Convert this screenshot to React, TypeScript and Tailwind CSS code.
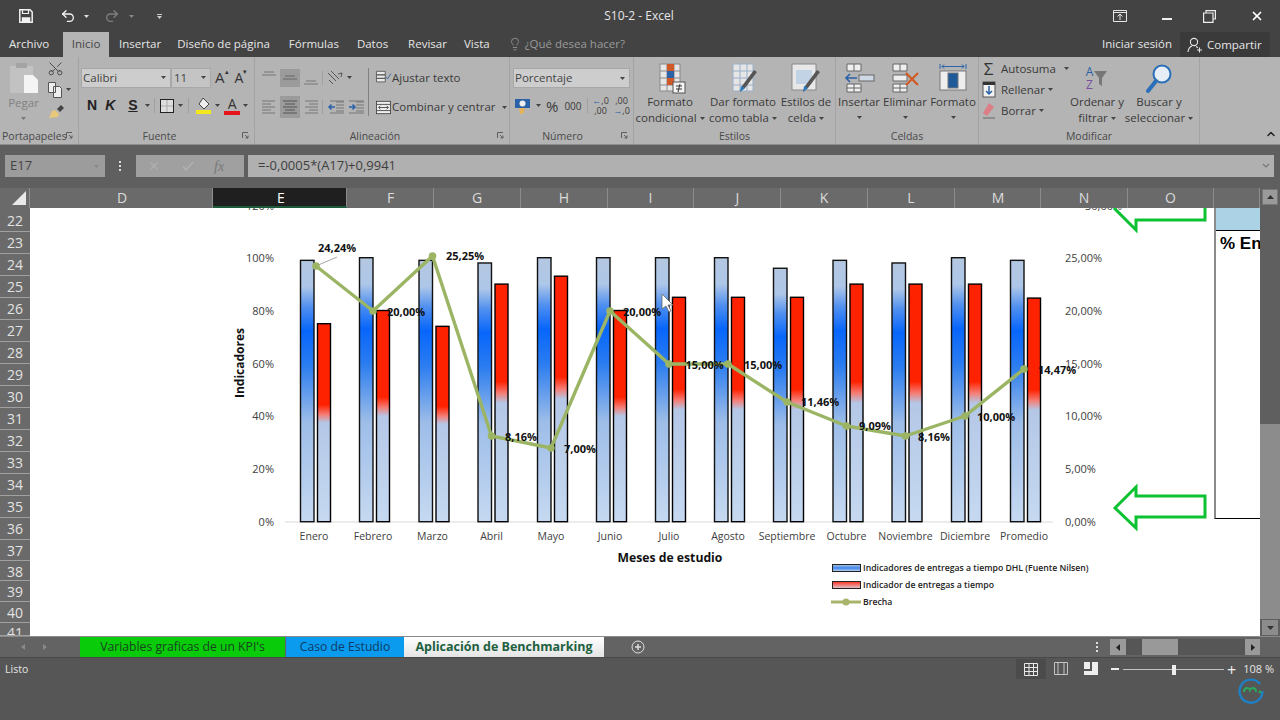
import { ReactNode } from "react"
import { ChevronUp, Lightbulb, Redo2, Scissors, Undo2, X } from "lucide-react"

const months = ["Enero", "Febrero", "Marzo", "Abril", "Mayo", "Junio", "Julio", "Agosto", "Septiembre", "Octubre", "Noviembre", "Diciembre", "Promedio"]
const centers = [314, 373, 432.5, 491.5, 551, 610, 669, 728, 787, 846.5, 905.5, 965, 1024]
const blue = [99, 100, 99, 98, 100, 100, 100, 100, 96, 99, 98, 100, 99]
const red = [75, 80, 74, 90, 93, 80, 85, 85, 85, 90, 90, 90, 84.7]
const linePts = [266, 311, 256, 436, 448, 311, 364, 364, 402, 426, 436, 416, 369]
const labels: [string, number, number][] = [
  ["24,24%", 318, 248], ["20,00%", 387, 312], ["25,25%", 446, 256], ["8,16%", 505, 437], ["7,00%", 564, 449],
  ["20,00%", 623, 312], ["15,00%", 685.5, 365], ["15,00%", 744, 365], ["11,46%", 801, 402], ["9,09%", 859, 426],
  ["8,16%", 918, 437], ["10,00%", 977, 417], ["14,47%", 1038, 370],
]
const rows = [
  { n: 22, c: "h-[24px] leading-[26px]" }, { n: 23, c: "h-[22px] leading-[22px]" }, { n: 24, c: "h-[22px] leading-[22px]" }, { n: 25, c: "h-[22px] leading-[22px]" }, { n: 26, c: "h-[22px] leading-[22px]" },
  { n: 27, c: "h-[22px] leading-[22px]" }, { n: 28, c: "h-[22px] leading-[22px]" }, { n: 29, c: "h-[22px] leading-[22px]" }, { n: 30, c: "h-[22px] leading-[22px]" }, { n: 31, c: "h-[22px] leading-[22px]" },
  { n: 32, c: "h-[22px] leading-[22px]" }, { n: 33, c: "h-[22px] leading-[22px]" }, { n: 34, c: "h-[22px] leading-[22px]" }, { n: 35, c: "h-[22px] leading-[22px]" }, { n: 36, c: "h-[22px] leading-[22px]" },
  { n: 37, c: "h-[21px] leading-[21px]" }, { n: 38, c: "h-[20px] leading-[21px]" }, { n: 39, c: "h-[21px] leading-[21px]" }, { n: 40, c: "h-[21px] leading-[21px]" }, { n: 41, c: "h-[13px] leading-[20px]" },
]
const cols = [
  { l: "D", c: "w-[183px] pl-[2px]" }, { l: "E", c: "w-[134px] pl-[3px] bg-[#1f1f1f] text-white border-b-2 border-b-[#1c5a3c]" }, { l: "F", c: "w-[87px] pl-[1px]" }, { l: "G", c: "w-[87px]" },
  { l: "H", c: "w-[87px]" }, { l: "I", c: "w-[86px]" }, { l: "J", c: "w-[87px] pl-[1px]" }, { l: "K", c: "w-[87px]" }, { l: "L", c: "w-[87px]" },
  { l: "M", c: "w-[86px] pl-[1px]" }, { l: "N", c: "w-[87px]" }, { l: "O", c: "w-[86px]" }, { l: "", c: "w-[46px]" },
]

function Caret({ className = "text-[#444]" }: { className?: string }) {
  return (
    <svg width="5" height="3" viewBox="0 0 5 3" className={className}>
      <path d="M0 0h5L2.5 3z" fill="currentColor" />
    </svg>
  )
}

function Launcher() {
  return (
    <svg width="7" height="7" viewBox="0 0 7 7" className="absolute right-[5px] top-[5px] text-[#555]" fill="none" stroke="currentColor">
      <path d="M.5 6V.5H6M3 3l3 3M6 3.5V6H3.5" strokeWidth="0.9" />
    </svg>
  )
}

function Group({ className, label, labelClass = "text-center", launcher, children }: { className: string; label: string; labelClass?: string; launcher?: boolean; children: ReactNode }) {
  return (
    <div className={`flex flex-col shrink-0 border-r border-r-[#a3a3a3] ${className}`}>
      <div className="h-[71px] flex">{children}</div>
      <div className={`relative h-[17px] text-[10.5px] leading-[19px] text-[#4a4a4a] ${labelClass}`}>
        {label}
        {launcher && <Launcher />}
      </div>
    </div>
  )
}

function Lines({ kind, tone = "#777" }: { kind: "l" | "c" | "r" | "t" | "m" | "b"; tone?: string }) {
  const paths = {
    l: "M1 3h13M1 6h9M1 9h13M1 12h9M1 15h13",
    c: "M1 3h14M3 6h10M1 9h14M3 12h10M1 15h14",
    r: "M2 3h13M6 6h9M2 9h13M6 12h9M2 15h13",
    t: "M3 3h10M1 6h14",
    m: "M3 7h10M1 10h14",
    b: "M3 12h10M1 15h14",
  }
  return (
    <svg width="16" height="18" viewBox="0 0 16 18" fill="none" stroke={tone} strokeWidth="1">
      <path d={paths[kind]} />
    </svg>
  )
}

function Big({ className, top, bottom, icon, caretBelow }: { className: string; top: string; bottom?: string; icon: ReactNode; caretBelow?: boolean }) {
  return (
    <div className={`flex flex-col items-center pt-[5px] text-[11.5px] leading-[16px] text-[#3a3a3a] whitespace-nowrap ${className}`}>
      <div className="h-[32px] flex items-center justify-center">{icon}</div>
      <div>{top}</div>
      {bottom && (
        <div className="flex items-center gap-[3px]">
          {bottom}
          <Caret />
        </div>
      )}
      {caretBelow && <div className="mt-[6px]"><Caret /></div>}
    </div>
  )
}

function GridIcon({ children, color = "#8a8a8a" }: { children?: ReactNode; color?: string }) {
  return (
    <svg width="32" height="32" viewBox="0 0 32 32" fill="none">
      <rect x="6" y="2" width="20" height="27" fill="#e6e6e6" stroke={color} />
      <path d="M6 9h20M6 16h20M6 23h20M13 2v27M20 2v27" stroke={color} />
      {children}
    </svg>
  )
}

function SmallRow({ icon, text, caretGap }: { icon: ReactNode; text: string; caretGap: string }) {
  return (
    <div className="h-[21px] flex items-center text-[11.5px] text-[#3a3a3a] whitespace-nowrap">
      <div className="w-[19px] flex justify-center">{icon}</div>
      <span className="ml-[3px]">{text}</span>
      <div className={caretGap}><Caret /></div>
    </div>
  )
}

function Ribbon() {
  return (
    <div className="h-[88px] bg-[#b4b4b4] flex shrink-0 border-b border-b-[#8e8e8e]">
      <Group className="w-[79px]" label="Portapapeles" labelClass="pl-[2px]" launcher>
        <div className="w-[47px] flex flex-col items-center pt-[5px]">
          <svg width="30" height="31" viewBox="0 0 30 31">
            <rect x="1" y="4" width="23" height="27" fill="#c2c2c2" />
            <rect x="7" y="1" width="11" height="5" fill="#a4a4a4" />
            <path d="M15 13h9l5 5v13H15z" fill="#f4f4f4" />
          </svg>
          <span className="text-[11.5px] leading-[16px] mt-[2px] text-[#808080]">Pegar</span>
          <div className="mt-[6px]"><Caret className="text-[#777]" /></div>
        </div>
        <div className="flex flex-col items-start pt-[3px] gap-[4px]">
          <Scissors size={17} className="text-[#444] -rotate-90" strokeWidth={1.3} />
          <div className="flex items-center gap-[2px]">
            <svg width="17" height="17" viewBox="0 0 17 17" fill="#eee" stroke="#555">
              <path d="M1.5 1.5h7v10h-7zM6.5 5.5h6l2 2v9h-8z" />
            </svg>
            <Caret />
          </div>
          <svg width="18" height="18" viewBox="0 0 18 18">
            <path d="M10 7l4-4 3 3-4 4z" fill="#444" />
            <path d="M2 16l3-7 3-1 4 4-1 3z" fill="#e8c77a" />
          </svg>
        </div>
      </Group>

      <Group className="w-[176px]" label="Fuente" labelClass="text-center pr-[14px]" launcher>
        <div className="flex flex-col pl-[2px] pt-[11px]">
          <div className="flex items-center h-[19px]">
            <div className="w-[90px] h-[20px] bg-[#cdcdcd] border border-[#a8a8a8] flex items-center justify-between px-[1px] pr-[4px] text-[11.5px] text-[#444]">
              Calibri <Caret />
            </div>
            <div className="w-[40px] h-[20px] bg-[#c4c4c4] border border-[#a8a8a8] flex items-center justify-between px-[2px] pr-[4px] text-[11.5px] text-[#444]">
              11 <Caret />
            </div>
            <span className="ml-[4px] text-[15px] text-[#333] font-medium">A</span>
            <span className="text-[7px] text-[#333] -mt-[10px]">▴</span>
            <span className="ml-[6px] text-[14px] text-[#333] font-medium">A</span>
            <span className="text-[7px] text-[#333] -mt-[10px]">▾</span>
          </div>
          <div className="flex items-center mt-[8px] h-[21px] pl-[6px] text-[14px] font-bold text-[#222]">
            <span className="font-['Liberation_Sans',sans-serif]">N</span>
            <span className="ml-[8px] italic font-['Liberation_Sans',sans-serif]">K</span>
            <span className="ml-[13px] underline font-['Liberation_Sans',sans-serif]">S</span>
            <div className="ml-[7px]"><Caret /></div>
            <div className="ml-[4px] w-px h-[15px] bg-[#a0a0a0]" />
            <svg width="16" height="16" viewBox="0 0 16 16" className="ml-[4px]" fill="#dedede" stroke="#222">
              <rect x="1.5" y="1.5" width="13" height="13" />
              <path d="M8 2v12M2 8h12" stroke="#aaa" />
            </svg>
            <div className="ml-[3px]"><Caret /></div>
            <div className="ml-[5px] w-px h-[15px] bg-[#a0a0a0]" />
            <svg width="17" height="17" viewBox="0 0 17 17" className="ml-[6px]">
              <path d="M8 1l6 6-5 5-5-5z" fill="#eee" stroke="#444" />
              <rect x="1" y="13" width="15" height="4" fill="#f4e81c" />
            </svg>
            <div className="ml-[3px]"><Caret /></div>
            <div className="ml-[4px] w-[17px] h-[20px] flex flex-col items-center text-[14px] leading-[15px] font-medium text-[#333]">
              A
              <div className="w-[16px] h-[4px] bg-[#e8141c]" />
            </div>
            <div className="ml-[2px]"><Caret /></div>
          </div>
        </div>
      </Group>

      <Group className="w-[255px]" label="Alineación" labelClass="text-center pr-[14px]" launcher>
        <div className="w-[113px] shrink-0 flex flex-col pl-[6px] pt-[10px]">
          <div className="flex items-center h-[21px] gap-[3px]">
            <Lines kind="t" />
            <div className="bg-[#9b9b9b] px-[2px]"><Lines kind="m" tone="#666" /></div>
            <Lines kind="b" />
            <div className="w-px h-[14px] bg-[#a0a0a0]" />
            <svg width="18" height="18" viewBox="0 0 18 18" fill="none" stroke="#555">
              <path d="M2 4l8 8M5 2l8 8M3 11l4 4M12 5l4-1-1 4" />
            </svg>
            <Caret />
          </div>
          <div className="flex items-center h-[26px] mt-[6px] gap-[3px]">
            <Lines kind="l" />
            <div className="bg-[#9b9b9b] px-[2px] py-[2px]"><Lines kind="c" tone="#555" /></div>
            <Lines kind="r" />
            <div className="w-px h-[14px] bg-[#a0a0a0]" />
            <svg width="17" height="18" viewBox="0 0 17 18" fill="none" className="ml-[2px]">
              <path d="M8 4h8M8 7h8M8 10h8M8 13h8M2 3h14M2 15h14" stroke="#777" />
              <path d="M7 9H1M3.500 6.500L1 9l2.500 2.500" stroke="#2a62a8" strokeWidth="1.5" />
            </svg>
            <svg width="17" height="18" viewBox="0 0 17 18" fill="none">
              <path d="M8 4h8M8 7h8M8 10h8M8 13h8M1 3h15M1 15h15" stroke="#777" />
              <path d="M1 9h6M4.500 6.500L7 9l-2.500 2.500" stroke="#2a62a8" strokeWidth="1.5" />
            </svg>
          </div>
        </div>
        <div className="mt-[11px] w-px h-[48px] shrink-0 bg-[#808080]" />
        <div className="flex flex-col pl-[6px] pt-[10px] text-[11.5px] text-[#3a3a3a] whitespace-nowrap">
          <div className="flex items-center h-[21px]">
            <svg width="17" height="15" viewBox="0 0 19 17" fill="#e8e8e8" stroke="#555">
              <path d="M1.500 1.500h10v4h-10zM1.500 5.500h10v4h-10zM1.500 9.500h10v4h-10z" />
              <path d="M12 8l2 2 4-6" fill="none" stroke="#2a62a8" />
            </svg>
            Ajustar texto
          </div>
          <div className="flex items-center h-[26px] mt-[6px]">
            <svg width="17" height="15" viewBox="0 0 19 17" fill="#eee" stroke="#444">
              <rect x="1.5" y="1.5" width="16" height="14" />
              <path d="M2 5h15M2 12h15M4 8.500h11M4 8.500l2-2M4 8.500l2 2M15 8.500l-2-2M15 8.500l-2 2" fill="none" />
            </svg>
            Combinar y centrar
            <div className="ml-[6px]"><Caret /></div>
          </div>
        </div>
      </Group>

      <Group className="w-[124px]" label="Número" labelClass="text-center pr-[18px]" launcher>
        <div className="flex flex-col pl-[3px] pt-[11px]">
          <div className="w-[117px] h-[20px] bg-[#cdcdcd] border border-[#a8a8a8] flex items-center justify-between pl-[1px] pr-[4px] text-[11.5px] text-[#444]">
            Porcentaje <Caret />
          </div>
          <div className="flex items-center mt-[7px] h-[21px] pl-[1px] text-[#3a3a3a]">
            <svg width="17" height="18" viewBox="0 0 17 18">
              <rect x="1" y="2" width="15" height="9" fill="#2a62a8" />
              <circle cx="8.5" cy="6.5" r="3" fill="#eee" />
              <path d="M5 11l6 0-2 6-3 0z" fill="#e3b25a" />
            </svg>
            <div className="ml-[5px]"><Caret /></div>
            <span className="ml-[5px] text-[15px] leading-[20px]">%</span>
            <span className="ml-[6px] text-[10px] leading-[20px]">000</span>
            <div className="ml-[5px] w-px h-[15px] bg-[#a0a0a0]" />
            <div className="ml-[4px] w-[18px] flex flex-col text-[9px] leading-[10px] text-center">
              <span><span className="text-[#2a62a8]">←</span>,0</span>
              <span>,00</span>
            </div>
            <div className="ml-[3px] w-[18px] flex flex-col text-[9px] leading-[10px] text-center">
              <span>,00</span>
              <span><span className="text-[#2a62a8]">→</span>,0</span>
            </div>
          </div>
        </div>
      </Group>

      <Group className="w-[202px]" label="Estilos">
        <Big className="w-[72px]" top="Formato" bottom="condicional" icon={
          <GridIcon>
            <rect x="13" y="9" width="7" height="7" fill="#2a62a8" />
            <rect x="13" y="2" width="7" height="7" fill="#d0592a" />
            <rect x="13" y="16" width="7" height="7" fill="#d0592a" />
            <rect x="19" y="20" width="12" height="11" fill="#f4f4f4" stroke="#555" />
            <path d="M22 24h6M22 27h6M26 22l-2 8" stroke="#333" />
          </GridIcon>
        } />
        <Big className="w-[74px]" top="Dar formato" bottom="como tabla" icon={
          <GridIcon color="#9ab0c8">
            <path d="M30 10L18 26l-5 4 2-6 12-16z" fill="#555" />
            <path d="M18 26l-5 4 1-6z" fill="#2a7ac0" />
          </GridIcon>
        } />
        <Big className="w-[52px]" top="Estilos de" bottom="celda" icon={
          <svg width="32" height="32" viewBox="0 0 32 32">
            <rect x="2" y="2" width="24" height="26" fill="#e8e8e8" stroke="#8a8a8a" />
            <rect x="6" y="8" width="16" height="14" fill="#c3d3e6" />
            <path d="M30 10L18 26l-5 4 2-6 12-16z" fill="#555" />
            <path d="M18 26l-5 4 1-6z" fill="#2a7ac0" />
          </svg>
        } />
      </Group>

      <Group className="w-[143px]" label="Celdas">
        <Big className="w-[46px]" top="Insertar" caretBelow icon={
          <svg width="32" height="32" viewBox="0 0 32 32" fill="#eee" stroke="#666">
            <path d="M4 2h14v7H4zM4 22h14v8H4zM11 2v7M11 22v8M4 26h14" />
            <rect x="16" y="13" width="15" height="6" fill="#cfd9e6" />
            <path d="M14 16H3M7 12l-4 4 4 4" fill="none" stroke="#2a62a8" strokeWidth="1.6" />
          </svg>
        } />
        <Big className="w-[46px]" top="Eliminar" caretBelow icon={
          <svg width="32" height="32" viewBox="0 0 32 32" fill="#eee" stroke="#666">
            <path d="M4 2h14v7H4zM4 22h14v8H4zM11 2v7M11 22v8M4 26h14M4 13h14v6H4z" />
            <path d="M17 11l12 12M29 11L17 23" stroke="#d05a22" strokeWidth="2.2" />
          </svg>
        } />
        <Big className="w-[50px]" top="Formato" caretBelow icon={
          <svg width="32" height="32" viewBox="0 0 32 32" fill="#eee" stroke="#777">
            <path d="M3 2v5M29 2v5M5 4.500h22M5 4.500l2-2M5 4.500l2 2M27 4.500l-2-2M27 4.500l-2 2" stroke="#2a62a8" fill="none" />
            <rect x="3" y="9" width="26" height="19" />
            <rect x="11" y="11" width="10" height="15" fill="#1f5a98" />
          </svg>
        } />
      </Group>

      <Group className="w-[221px]" label="Modificar">
        <div className="w-[90px] pt-[1px] flex flex-col">
          <SmallRow text="Autosuma" caretGap="ml-[8px]" icon={<span className="text-[17px] leading-[17px] text-[#333]">Σ</span>} />
          <SmallRow text="Rellenar" caretGap="ml-[3px]" icon={
            <svg width="14" height="17" viewBox="0 0 14 17">
              <rect x="1" y="1" width="12" height="15" fill="#f2f2f2" stroke="#555" />
              <rect x="1" y="1" width="12" height="3" fill="#333" />
              <path d="M7 5v8M4 10l3 3 3-3" stroke="#2a62a8" strokeWidth="1.5" fill="none" />
            </svg>
          } />
          <SmallRow text="Borrar" caretGap="ml-[3px]" icon={
            <svg width="15" height="17" viewBox="0 0 15 17">
              <path d="M8 1l5 4-7 9-4-3z" fill="#dc7e88" />
              <path d="M2 16h12" stroke="#666" />
            </svg>
          } />
        </div>
        <Big className="w-[56px]" top="Ordenar y" bottom="filtrar" icon={
          <div className="flex items-center">
            <div className="flex flex-col text-[12px] leading-[13px] text-center font-medium">
              <span className="text-[#2a62a8]">A</span>
              <span className="text-[#7a4fa0]">Z</span>
            </div>
            <svg width="15" height="18" viewBox="0 0 15 18">
              <path d="M1 2h13L9 9v8l-3-2V9z" fill="#777" />
            </svg>
          </div>
        } />
        <Big className="w-[68px]" top="Buscar y" bottom="seleccionar" icon={
          <svg width="28" height="30" viewBox="0 0 28 30" fill="none">
            <circle cx="17" cy="11" r="8.5" fill="#e8eef5" stroke="#2a6fb8" strokeWidth="2" />
            <path d="M11 18L3 28" stroke="#2a6fb8" strokeWidth="4" strokeLinecap="round" />
          </svg>
        } />
      </Group>

      <div className="flex-1 flex items-end justify-end pb-[4px] pr-[3px]">
        <ChevronUp size={12} strokeWidth={3} className="text-[#222]" />
      </div>
    </div>
  )
}

function Chart() {
  return (
    <svg viewBox="30 208 1184 428" className="w-[1184px] h-[428px] shrink-0 bg-white">
      <defs>
        <linearGradient id="bf" x1="0" y1="0" x2="0" y2="1">
          <stop offset="0" stopColor="#b4c7e1" />
          <stop offset="0.1" stopColor="#aec7e8" />
          <stop offset="0.18" stopColor="#4f8ff0" />
          <stop offset="0.27" stopColor="#0766fb" />
          <stop offset="0.4" stopColor="#2a7cf0" />
          <stop offset="0.62" stopColor="#9dbde8" />
          <stop offset="1" stopColor="#c6d9f1" />
        </linearGradient>
        <linearGradient id="rf" x1="0" y1="0" x2="0" y2="1">
          <stop offset="0" stopColor="#ff2200" />
          <stop offset="0.41" stopColor="#ff2200" />
          <stop offset="0.46" stopColor="#f47f78" />
          <stop offset="0.5" stopColor="#b4c7e6" />
          <stop offset="1" stopColor="#c6d9f1" />
        </linearGradient>
        <linearGradient id="lb" x1="0" y1="0" x2="0" y2="1">
          <stop offset="0" stopColor="#b4c7e1" />
          <stop offset="0.5" stopColor="#3d86ee" />
          <stop offset="1" stopColor="#c6d9f1" />
        </linearGradient>
        <linearGradient id="lr" x1="0" y1="0" x2="0" y2="1">
          <stop offset="0" stopColor="#ff3020" />
          <stop offset="1" stopColor="#e0c8d0" />
        </linearGradient>
      </defs>

      <text x="260" y="210" textAnchor="middle" fontSize="11" fill="#404040">120%</text>
      <text x="1085" y="210" fontSize="11" fill="#404040">30,00%</text>

      {[100, 80, 60, 40, 20, 0].map((v, i) => (
        <text key={v} x="274" y={262 + i * 52.8} textAnchor="end" fontSize="11" fill="#404040">{v}%</text>
      ))}
      {["25,00%", "20,00%", "15,00%", "10,00%", "5,00%", "0,00%"].map((v, i) => (
        <text key={v} x="1065" y={262 + i * 52.8} fontSize="11" fill="#404040">{v}</text>
      ))}

      <text transform="translate(244 363) rotate(-90)" textAnchor="middle" fontSize="12" fontWeight="700" fill="#111">Indicadores</text>
      <line x1="285" y1="522" x2="1053" y2="522" stroke="#d9d9d9" />

      {months.map((m, i) => {
        const blueTop = 521.7 - blue[i] * 2.64
        const redTop = 521.7 - red[i] * 2.64
        return (
          <g key={m}>
            <rect x={centers[i] - 13.5} y={blueTop} width="13.5" height={521.7 - blueTop} fill="url(#bf)" stroke="#111" strokeWidth="1.4" />
            <rect x={centers[i] + 3.5} y={redTop} width="13" height={521.7 - redTop} fill="url(#rf)" stroke="#000" strokeWidth="1.4" />
            <text x={centers[i]} y="540" textAnchor="middle" fontSize="10.5" fill="#404040">{m}</text>
          </g>
        )
      })}

      <line x1="316" y1="266" x2="337" y2="257" stroke="#a6a6a6" />
      <polyline
        points={centers.map((c, i) => `${i == 0 ? 316 : c},${linePts[i]}`).join(" ")}
        fill="none"
        stroke="#9bb565"
        strokeWidth="3.4"
        strokeLinejoin="round"
      />
      {centers.map((c, i) => (
        <circle key={i} cx={i == 0 ? 316 : c} cy={linePts[i]} r="3.8" fill="#9bb565" />
      ))}
      {labels.map(([t, x, y], i) => (
        <text key={i} x={x} y={y + 4} fontSize="11" fontWeight="700" fill="#111">{t}</text>
      ))}

      <text x="670" y="562" textAnchor="middle" fontSize="12.2" fontWeight="700" fill="#111">Meses de estudio</text>

      <rect x="832.5" y="564.5" width="28" height="7" fill="url(#lb)" stroke="#222" />
      <text x="863" y="570.5" fontSize="8.7" fontWeight="600" fill="#222">Indicadores de entregas a tiempo DHL (Fuente Nilsen)</text>
      <rect x="832.5" y="581.5" width="28" height="7" fill="url(#lr)" stroke="#222" />
      <text x="863" y="588" fontSize="8.7" fontWeight="600" fill="#222">Indicador de entregas a tiempo</text>
      <line x1="831" y1="602" x2="861" y2="602" stroke="#a9b46a" strokeWidth="3" />
      <circle cx="846" cy="602" r="3.5" fill="#a9b46a" />
      <text x="863" y="605" fontSize="8.7" fontWeight="600" fill="#222">Brecha</text>

      <path d="M1205 208V220H1136V230L1115 209L1116 208" fill="none" stroke="#0cc233" strokeWidth="3" />
      <path d="M1115 508L1136 487V496H1205V517H1136V528Z" fill="none" stroke="#0cc233" strokeWidth="3" />

      <path d="M662 294v15l4-3 3 6 2-1-3-6h5z" fill="#fff" stroke="#666" strokeWidth="0.8" />
    </svg>
  )
}

export default function App() {
  return (
    <div className="relative w-[1280px] h-[720px] overflow-hidden flex flex-col bg-[#565656] font-['Open_Sans','Noto_Sans',sans-serif]">
      <div className="h-[32px] shrink-0 bg-[#434343] flex items-center text-[#e6e6e6]">
        <svg width="14" height="14" viewBox="0 0 14 14" className="ml-[19px]" fill="none" stroke="#f2f2f2" strokeWidth="1.5">
          <path d="M.8.8h10.200l2.200 2.200v10.200H.8z" />
          <path d="M3.500 1v3.500h6V1" strokeWidth="1.2" />
          <path d="M3 13.500V8.500h8v5z" fill="#f2f2f2" strokeWidth="0.5" />
        </svg>
        <Undo2 size={16} strokeWidth={2} className="ml-[27px] text-[#f2f2f2]" />
        <div className="ml-[8px]"><Caret className="text-[#ddd]" /></div>
        <Redo2 size={16} strokeWidth={2} className="ml-[15px] text-[#7f7f7f]" />
        <div className="ml-[9px]"><Caret className="text-[#888]" /></div>
        <div className="ml-[23px] flex flex-col items-center gap-[1px]">
          <div className="w-[5px] h-px bg-[#ccc]" />
          <Caret className="text-[#ccc]" />
        </div>
        <div className="flex-1 text-center text-[12px] pl-[3px]">S10-2 - Excel</div>
        <svg width="14" height="12" viewBox="0 0 14 12" fill="none" stroke="#e6e6e6">
          <path d="M.5.5h13v11H.5zM1 2.500h12M7 10V4.500M4.500 6.500L7 4l2.500 2.500" />
        </svg>
        <div className="ml-[35px] w-[10px] h-[2px] bg-[#eee] mt-[5px]" />
        <svg width="13" height="13" viewBox="0 0 13 13" className="ml-[31px]" fill="none" stroke="#eee" strokeWidth="1.2">
          <path d="M3 3V.6h9.400V9H10M.6 3h9.400v9.400H.6z" />
        </svg>
        <X size={14} strokeWidth={3} className="ml-[34px] mr-[16px] text-white" />
      </div>

      <div className="h-[25px] shrink-0 bg-[#434343] flex items-stretch text-[11.5px] leading-[24px] text-[#e6e6e6] whitespace-nowrap">
        <span className="ml-[9px]">Archivo</span>
        <span className="ml-[14px] w-[46px] text-center bg-[#b4b4b4] text-[#444]">Inicio</span>
        <span className="ml-[10px]">Insertar</span>
        <span className="ml-[16px]">Diseño de página</span>
        <span className="ml-[19px]">Fórmulas</span>
        <span className="ml-[18px]">Datos</span>
        <span className="ml-[20px]">Revisar</span>
        <span className="ml-[17px]">Vista</span>
        <Lightbulb size={14} strokeWidth={1.4} className="ml-[18px] mt-[5px] text-[#999]" />
        <span className="ml-[3px] text-[#9a9a9a]">¿Qué desea hacer?</span>
        <span className="ml-auto">Iniciar sesión</span>
        <div className="ml-[8px] w-[90px] bg-[#3a3a3a] flex items-center pl-[7px] gap-[4px] mr-[10px]">
          <svg width="16" height="16" viewBox="0 0 16 16" fill="none" stroke="#e6e6e6" strokeWidth="1.1">
            <circle cx="7" cy="5" r="3.6" />
            <path d="M1 15c.5-4 2.500-5.500 4-6M9 9.500c.7.300 1.300.8 1.800 1.300M12.500 10.500v5M10 13h5" />
          </svg>
          Compartir
        </div>
      </div>

      <Ribbon />

      <div className="h-[43px] shrink-0 bg-[#5f5f5f] flex items-center pb-[1px] pl-[5px] text-[#444]">
        <div className="w-[100px] h-[22px] bg-[#9c9c9c] flex items-center justify-between pl-[5px] pr-[6px] text-[13px]">
          E17 <Caret className="text-[#888]" />
        </div>
        <div className="ml-[14px] flex flex-col gap-[2px]">
          <div className="w-[2px] h-[2px] bg-[#ddd]" />
          <div className="w-[2px] h-[2px] bg-[#ddd]" />
          <div className="w-[2px] h-[2px] bg-[#ddd]" />
        </div>
        <div className="ml-[15px] w-[108px] h-[22px] bg-[#a0a0a0] flex items-center pl-[12px] text-[#b0b0b0]">
          <X size={12} strokeWidth={2.5} />
          <svg width="12" height="12" viewBox="0 0 12 12" className="ml-[22px]" fill="none" stroke="currentColor" strokeWidth="1.6">
            <path d="M1 6l3 4 7-8" />
          </svg>
          <span className="ml-[20px] italic font-['Liberation_Serif',serif] text-[14px] text-[#777]">fx</span>
        </div>
        <div className="ml-[4px] w-[1026px] h-[22px] bg-[#b0b0b0] flex items-center justify-between pl-[10px] pr-[4px] text-[13px] text-[#3e3e3e]">
          =-0,0005*(A17)+0,9941
          <svg width="8" height="6" viewBox="0 0 8 6" fill="none" stroke="#777" strokeWidth="1.2"><path d="M1 1l3 3 3-3" /></svg>
        </div>
      </div>

      <div className="flex h-[448px] shrink-0">
        <div className="flex-1 min-w-0 flex flex-col">
          <div className="h-[20px] flex text-[14px] leading-[20px] text-center text-[#dcdcdc] bg-[#6a6a6a]">
            <div className="w-[30px] border-r border-r-[#8c8c8c] flex items-end justify-end pr-[3px] pb-[3px]">
              <svg width="14" height="14" viewBox="0 0 14 14"><path d="M14 0v14H0z" fill="#e8e8e8" /></svg>
            </div>
            {cols.map((c) => (
              <div key={c.l} className={`border-r border-r-[#8c8c8c] ${c.c}`}>{c.l}</div>
            ))}
          </div>
          <div className="flex h-[428px] overflow-hidden">
            <div className="w-[30px] shrink-0 bg-[#6a6a6a] flex flex-col text-[14px] text-center text-[#e2e2e2]">
              {rows.map((r) => (
                <div key={r.n} className={`${r.c} overflow-hidden border-b border-b-[#a0a0a0] shrink-0`}>{r.n}</div>
              ))}
            </div>
            <Chart />
            <div className="flex-1 bg-white overflow-hidden">
              <div className="h-[311px] border-l-2 border-l-[#8a8a8a] border-b border-b-black">
                <div className="h-[23px] bg-[#abd3e5] border-b border-b-black" />
                <div className="pl-[4px] pt-[1px] text-[17px] leading-[24px] font-bold text-black whitespace-nowrap font-['Liberation_Sans',sans-serif]">% En</div>
              </div>
            </div>
          </div>
        </div>
        <div className="w-[20px] shrink-0 bg-[#5f5f5f] flex flex-col items-center">
          <div className="mt-[1px] w-[16px] h-[16px] bg-[#9a9a9a] border border-[#777] flex items-center justify-center">
            <svg width="7" height="4" viewBox="0 0 7 4"><path d="M3.5 0L7 4H0z" fill="#333" /></svg>
          </div>
          <div className="mt-[219px] w-full h-[195px] bg-[#8c8c8c]" />
          <div className="mt-[1px] w-[16px] h-[15px] bg-[#8c8c8c] flex items-center justify-center">
            <svg width="7" height="4" viewBox="0 0 7 4"><path d="M0 0h7L3.5 4z" fill="#333" /></svg>
          </div>
        </div>
      </div>

      <div className="h-[21px] shrink-0 bg-[#636363] flex items-center border-t border-t-[#8a8a8a]">
        <svg width="4" height="6" viewBox="0 0 4 6" className="ml-[21px]"><path d="M4 0v6L0 3z" fill="#8a8a8a" /></svg>
        <svg width="4" height="6" viewBox="0 0 4 6" className="ml-[18px]"><path d="M0 0v6l4-3z" fill="#8a8a8a" /></svg>
        <div className="ml-[33px] w-[205px] h-full bg-[#0acb0a] text-center text-[12.2px] leading-[20px] text-[#16451f]">Variables graficas de un KPI's</div>
        <div className="ml-[1px] w-[118px] h-full bg-[#0a9bee] text-center text-[12.2px] leading-[20px] text-[#0f3a66]">Caso de Estudio</div>
        <div className="w-[200px] h-full bg-gradient-to-b from-white to-[#e4e4e4] text-center text-[12.5px] leading-[20px] font-bold text-[#1d6040]">Aplicación de Benchmarking</div>
        <svg width="14" height="14" viewBox="0 0 14 14" className="ml-[27px]" fill="none" stroke="#e0e0e0">
          <circle cx="7" cy="7" r="6" />
          <path d="M7 4v6M4 7h6" strokeWidth="1.4" />
        </svg>
        <div className="ml-auto mr-[12px] flex flex-col gap-[2px]">
          <div className="w-[2px] h-[2px] bg-[#ddd]" />
          <div className="w-[2px] h-[2px] bg-[#ddd]" />
          <div className="w-[2px] h-[2px] bg-[#ddd]" />
        </div>
        <div className="w-[150px] h-[16px] mr-[20px] bg-[#565656] flex items-center">
          <div className="w-[16px] h-full bg-[#9a9a9a] flex items-center justify-center">
            <svg width="4" height="7" viewBox="0 0 4 7"><path d="M4 0v7L0 3.5z" fill="#222" /></svg>
          </div>
          <div className="ml-[16px] w-[36px] h-full bg-[#999]" />
          <div className="ml-auto w-[15px] h-full bg-[#9a9a9a] flex items-center justify-center">
            <svg width="4" height="7" viewBox="0 0 4 7"><path d="M0 0v7l4-3.5z" fill="#222" /></svg>
          </div>
        </div>
      </div>

      <div className="flex-1 bg-[#565656] border-t border-t-[#484848] flex items-start text-[#e4e4e4]">
        <span className="ml-[5px] mt-[4px] text-[10.5px] leading-[14px]">Listo</span>
        <div className="ml-auto mt-[1px] w-[30px] h-[20px] bg-[#4b4b4b] flex items-center justify-center">
          <svg width="14" height="13" viewBox="0 0 14 13" fill="none" stroke="#e8e8e8">
            <path d="M.5.5h13v12H.5zM5 1v11M9.500 1v11M1 4.500h12M1 8.500h12" />
          </svg>
        </div>
        <svg width="14" height="13" viewBox="0 0 14 13" className="ml-[8px] mt-[4px]" fill="none" stroke="#c4c4c4">
          <path d="M.5.5h13v12H.5zM4 1v11M10 1v11" />
        </svg>
        <svg width="14" height="13" viewBox="0 0 14 13" className="ml-[16px] mt-[4px]" fill="#eee">
          <path d="M0 0h6v7H0zM8 0h6v9H8zM0 9h14v4H0z" />
        </svg>
        <div className="ml-[13px] mt-[10px] w-[8px] h-[2px] bg-[#eee]" />
        <div className="ml-[4px] mt-[11px] w-[101px] h-px bg-[#c4c4c4] flex items-center">
          <div className="ml-[49px] w-[4px] h-[10px] bg-[#eee]" />
        </div>
        <div className="ml-[3px] mt-[5px] text-[16px] leading-[14px] text-[#eee]">+</div>
        <span className="ml-[7px] mr-[6px] mt-[4px] text-[11px] leading-[14px] whitespace-nowrap">108 %</span>
      </div>

      <div className="absolute left-[1238px] top-[678px]">
        <svg width="26" height="26" viewBox="0 0 26 26" fill="none">
          <path d="M22 6A11.500 11.500 0 1 0 24.500 13" stroke="#1f7fc4" strokeWidth="2.4" />
          <path d="M6 14c0-5 5-5 6-2 1-3 6-3 6 2" stroke="#2aa85c" strokeWidth="2" />
          <circle cx="22" cy="14" r="1.4" fill="#2aa85c" />
        </svg>
      </div>
    </div>
  )
}
